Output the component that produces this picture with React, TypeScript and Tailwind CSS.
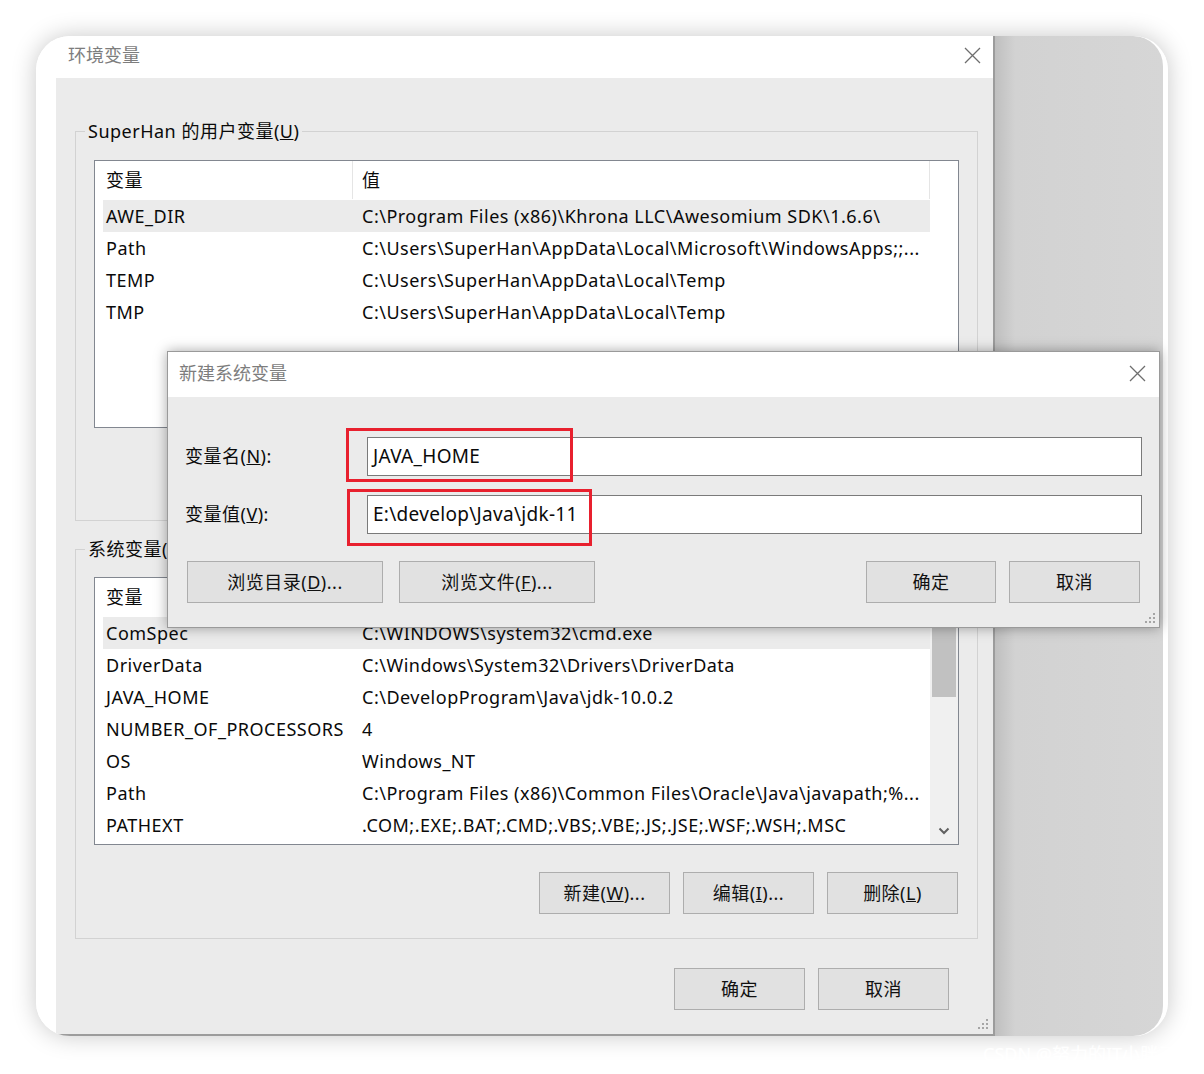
import React from 'react';

type Row = [string, string];

const userRows: Row[] = [
  ['AWE_DIR', 'C:\\Program Files (x86)\\Khrona LLC\\Awesomium SDK\\1.6.6\\'],
  ['Path', 'C:\\Users\\SuperHan\\AppData\\Local\\Microsoft\\WindowsApps;;...'],
  ['TEMP', 'C:\\Users\\SuperHan\\AppData\\Local\\Temp'],
  ['TMP', 'C:\\Users\\SuperHan\\AppData\\Local\\Temp'],
];

const sysRows: Row[] = [
  ['ComSpec', 'C:\\WINDOWS\\system32\\cmd.exe'],
  ['DriverData', 'C:\\Windows\\System32\\Drivers\\DriverData'],
  ['JAVA_HOME', 'C:\\DevelopProgram\\Java\\jdk-10.0.2'],
  ['NUMBER_OF_PROCESSORS', '4'],
  ['OS', 'Windows_NT'],
  ['Path', 'C:\\Program Files (x86)\\Common Files\\Oracle\\Java\\javapath;%...'],
  ['PATHEXT', '.COM;.EXE;.BAT;.CMD;.VBS;.VBE;.JS;.JSE;.WSF;.WSH;.MSC'],
];

const CloseX = () => (
  <svg width="17" height="17" viewBox="0 0 17 17">
    <path d="M1 1 L16 16 M16 1 L1 16" stroke="#6e6e6e" strokeWidth="1.3" fill="none" />
  </svg>
);

const Grip = () => (
  <svg width="12" height="12" viewBox="0 0 12 12">
    <rect x="9" y="1" width="2" height="2" fill="#a5a5a5" />
    <rect x="5" y="5" width="2" height="2" fill="#a5a5a5" />
    <rect x="9" y="5" width="2" height="2" fill="#a5a5a5" />
    <rect x="1" y="9" width="2" height="2" fill="#a5a5a5" />
    <rect x="5" y="9" width="2" height="2" fill="#a5a5a5" />
    <rect x="9" y="9" width="2" height="2" fill="#a5a5a5" />
  </svg>
);

const Btn: React.FC<{ w: string; children: React.ReactNode }> = ({ w, children }) => (
  <div className={`flex h-[42px] items-center justify-center border border-[#adadad] bg-[#e1e1e1] text-[18px] text-[#111] ${w}`}>
    {children}
  </div>
);

const ListView: React.FC<{ rows: Row[]; scroll?: boolean }> = ({ rows, scroll }) => (
  <div className="flex h-[268px] w-[865px] overflow-hidden border border-[#828790] bg-white">
    <div className="w-[835px]">
      <div className="flex h-[38px] items-center">
        <div className="h-full w-[258px] border-r border-[#e5e5e5] pl-[11px] leading-[38px]">变量</div>
        <div className="h-full w-[577px] border-r border-[#e5e5e5] pl-[9px] leading-[38px]">值</div>
      </div>
      <div className="mt-px pl-[8px]">
        {rows.map((r, i) => (
          <div key={i} className={`flex h-[32px] w-[827px] items-center whitespace-nowrap ${i === 0 ? 'bg-[#ebebeb]' : ''}`}>
            <div className="w-[256px] pl-[3px]">{r[0]}</div>
            <div className="pl-[3px]">{r[1]}</div>
          </div>
        ))}
      </div>
    </div>
    <div className={`flex w-[28px] flex-col ${scroll ? 'bg-[#f0f0f0]' : ''}`}>
      {scroll && (
        <>
          <div className="h-[40px]" />
          <div className="mx-[2px] h-[79px] bg-[#c1c1c1]" />
          <div className="flex-1" />
          <div className="flex h-[26px] items-center justify-center">
            <svg width="12" height="8" viewBox="0 0 12 8">
              <path d="M1.5 1.5 L6 6 L10.5 1.5" stroke="#606060" strokeWidth="2" fill="none" />
            </svg>
          </div>
        </>
      )}
    </div>
  </div>
);

const ListButtons = () => (
  <div className="flex justify-end gap-[13px] pr-px">
    <Btn w="w-[131px]">新建(<u>W</u>)...</Btn>
    <Btn w="w-[131px]">编辑(<u>I</u>)...</Btn>
    <Btn w="w-[131px]">删除(<u>L</u>)</Btn>
  </div>
);

export default function App() {
  return (
    <div className="relative h-[1074px] w-[1204px] overflow-hidden bg-white pl-[36px] pt-[36px] font-['Noto_Sans','Noto_Sans_CJK_SC',sans-serif] text-[18px] tracking-[0.5px] text-[#0a0a0a]">
      <div className="relative flex h-[1000px] w-[1132px] overflow-hidden rounded-[34px] bg-white shadow-[0_0_24px_rgba(0,0,0,0.22)]">
        <div className="w-[20px] bg-white" />

        {/* 环境变量 dialog */}
        <div className="relative flex w-[939px] flex-col border-b-2 border-r-2 border-[#9c9c9c]">
          <div className="flex h-[42px] items-center justify-between bg-white pb-[4px] pl-[12px] pr-[12px]">
            <span className="tracking-normal text-[#7d7d7d]">环境变量</span>
            <CloseX />
          </div>
          <div className="relative flex-1 bg-[#ebebeb] pl-[19px]">
            <fieldset className="mt-[41px] w-[903px] border border-[#d2d2d2] px-[18px] pb-[24px] pt-[17px]">
              <legend className="ml-[-9px] px-[3px] leading-[24px]">
                SuperHan 的用户变量(<u>U</u>)
              </legend>
              <ListView rows={userRows} />
              <div className="mt-[26px]">
                <ListButtons />
              </div>
            </fieldset>

            <fieldset className="mt-[16px] w-[903px] border border-[#d2d2d2] px-[18px] pb-[24px] pt-[16px]">
              <legend className="ml-[-9px] px-[3px] leading-[24px]">
                系统变量(<u>S</u>)
              </legend>
              <ListView rows={sysRows} scroll />
              <div className="mt-[27px]">
                <ListButtons />
              </div>
            </fieldset>

            <div className="mt-[29px] flex justify-end gap-[13px] pr-[44px]">
              <Btn w="w-[131px]">确定</Btn>
              <Btn w="w-[131px]">取消</Btn>
            </div>
            <div className="absolute bottom-[4px] right-[4px]">
              <Grip />
            </div>
          </div>
        </div>

        <div className="flex-1 rounded-r-[30px] bg-linear-to-r from-[#bfbfbf] from-0% via-[#d2d2d2] via-12% to-[#d6d6d6]" />
        <div className="w-[5px] bg-white" />

        {/* 新建系统变量 dialog */}
        <div className="absolute left-[131px] top-[315px] flex h-[277px] w-[993px] flex-col border border-[#9a9a9a] shadow-[0_0_12px_rgba(0,0,0,0.35)]">
          <div className="flex h-[45px] items-center justify-between bg-white pb-[2px] pl-[11px] pr-[13px]">
            <span className="tracking-normal text-[#7d7d7d]">新建系统变量</span>
            <CloseX />
          </div>
          <div className="flex-1 bg-[#ebebeb]">
            <div className="mt-[40px] flex items-center pl-[17px]">
              <div className="w-[182px]">变量名(<u>N</u>):</div>
              <div className="flex h-[39px] w-[775px] items-center border border-[#7a7a7a] bg-white pl-[5px] text-[19px] tracking-[0.3px]">JAVA_HOME</div>
            </div>
            <div className="mt-[19px] flex items-center pl-[17px]">
              <div className="w-[182px]">变量值(<u>V</u>):</div>
              <div className="flex h-[39px] w-[775px] items-center border border-[#7a7a7a] bg-white pl-[5px] text-[19px] tracking-[0.3px]">E:\develop\Java\jdk-11</div>
            </div>
            <div className="mt-[27px] flex justify-between px-[19px]">
              <div className="flex gap-[16px]">
                <Btn w="w-[196px]">浏览目录(<u>D</u>)...</Btn>
                <Btn w="w-[196px]">浏览文件(<u>F</u>)...</Btn>
              </div>
              <div className="flex gap-[13px]">
                <Btn w="w-[130px]">确定</Btn>
                <Btn w="w-[131px]">取消</Btn>
              </div>
            </div>
          </div>
          <div className="absolute bottom-[3px] right-[3px]">
            <Grip />
          </div>
          <div className="absolute left-[178px] top-[76px] h-[54px] w-[227px] border-[3px] border-[#e8202e]" />
          <div className="absolute left-[179px] top-[137px] h-[57px] w-[245px] border-[3px] border-[#e8202e]" />
        </div>
      </div>

      <div className="absolute left-[983px] top-[1041px] tracking-normal text-white/90">CSDN @努力的IT小胖子</div>
    </div>
  );
}
